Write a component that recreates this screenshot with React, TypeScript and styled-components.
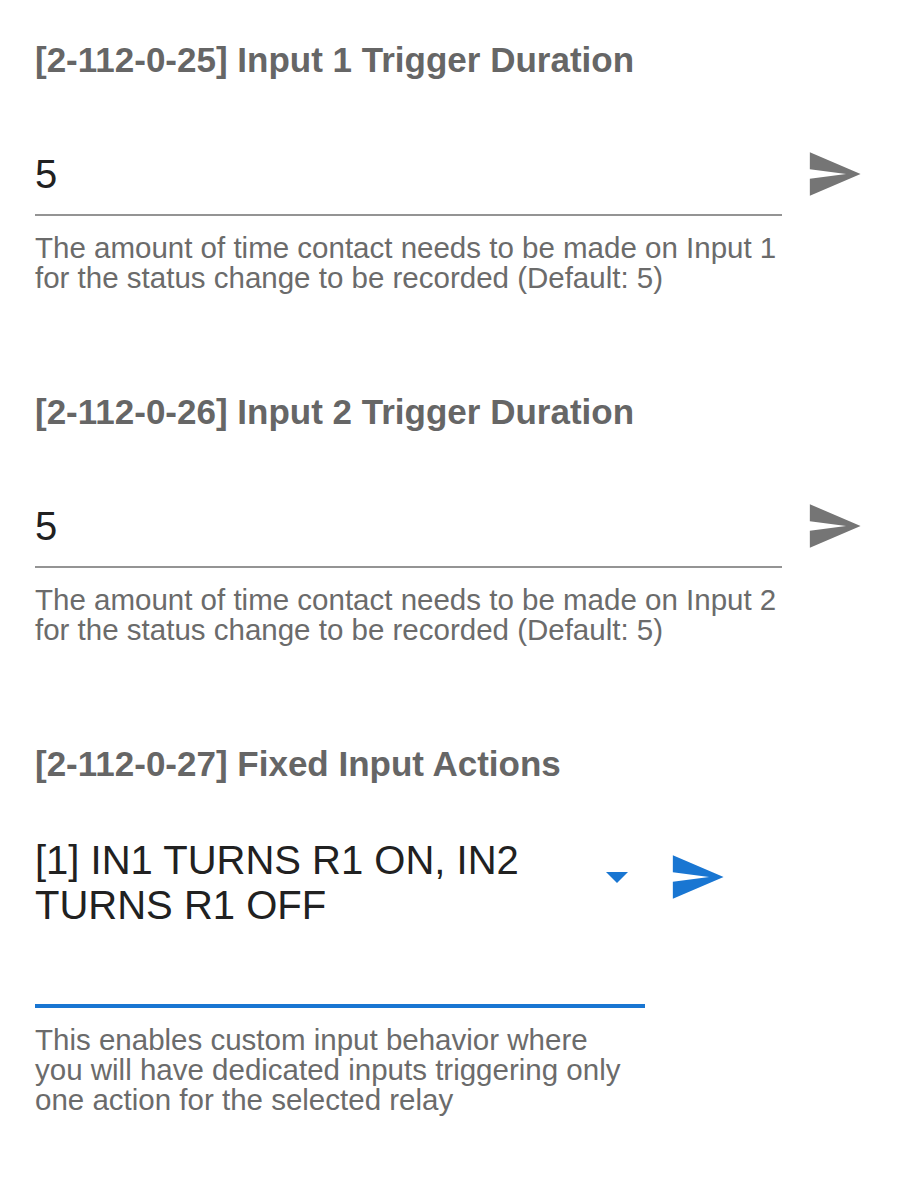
import styled, { createGlobalStyle } from "styled-components";

const GlobalStyle = createGlobalStyle`
  html, body {
    margin: 0;
    padding: 0;
    background: #ffffff;
  }
  body {
    font-family: "Liberation Sans", Arial, sans-serif;
  }
`;

const Page = styled.div`
  display: flex;
  flex-direction: column;
  padding: 41px 0 60px 35px;
`;

const Section = styled.section<{ gapAfter: number }>`
  display: flex;
  flex-direction: column;
  margin-bottom: ${(p) => p.gapAfter}px;
`;

const Title = styled.h2<{ spaceBelow: number }>`
  margin: 0 0 ${(p) => p.spaceBelow}px 0;
  font-size: 35px;
  line-height: 38px;
  font-weight: 700;
  color: #666666;
`;

const FieldRow = styled.div`
  display: flex;
  align-items: flex-start;
  gap: 23px;
`;

const TextField = styled.div<{ width: number }>`
  width: ${(p) => p.width}px;
  padding-bottom: 16px;
  border-bottom: 2px solid #949494;
  font-size: 40px;
  line-height: 48px;
  color: #212121;
`;

const SelectField = styled.div<{ width: number }>`
  position: relative;
  width: ${(p) => p.width}px;
  box-sizing: border-box;
  padding: 0 60px 76px 0;
  border-bottom: 4px solid #1976d2;
  font-size: 40px;
  line-height: 45px;
  color: #212121;
`;

const Arrow = styled.span`
  position: absolute;
  right: 17px;
  top: 34px;
  width: 0;
  height: 0;
  border-left: 11.5px solid transparent;
  border-right: 11.5px solid transparent;
  border-top: 11px solid #1976d2;
`;

const SendButton = styled.button<{ offset: number }>`
  display: flex;
  padding: 0;
  border: none;
  background: none;
  cursor: pointer;
  margin-top: ${(p) => p.offset}px;
`;

const Helper = styled.p<{ width: number }>`
  margin: 17px 0 0 0;
  width: ${(p) => p.width}px;
  font-size: 29.5px;
  line-height: 30px;
  color: #6b6b6b;
`;

const SendIcon = ({ color }: { color: string }) => (
  <svg width="58" height="58" viewBox="0 0 24 24">
    <path fill={color} d="M2.01 21L23 12 2.01 3 2 10l15 2-15 2z" />
  </svg>
);

const durations = [
  { id: "25", input: 1 },
  { id: "26", input: 2 },
];

export default function App() {
  return (
    <>
      <GlobalStyle />
      <Page>
        {durations.map((d) => (
          <Section key={d.id} gapAfter={100}>
            <Title spaceBelow={71}>
              [2-112-0-{d.id}] Input {d.input} Trigger Duration
            </Title>
            <FieldRow>
              <TextField width={747}>5</TextField>
              <SendButton offset={-5}>
                <SendIcon color="#757575" />
              </SendButton>
            </FieldRow>
            <Helper width={760}>
              The amount of time contact needs to be made on Input {d.input} for
              the status change to be recorded (Default: 5)
            </Helper>
          </Section>
        ))}
        <Section gapAfter={0}>
          <Title spaceBelow={55}>[2-112-0-27] Fixed Input Actions</Title>
          <FieldRow>
            <SelectField width={610}>
              [1] IN1 TURNS R1 ON, IN2 TURNS R1 OFF
              <Arrow />
            </SelectField>
            <SendButton offset={10}>
              <SendIcon color="#1976d2" />
            </SendButton>
          </FieldRow>
          <Helper width={600}>
            This enables custom input behavior where you will have dedicated
            inputs triggering only one action for the selected relay
          </Helper>
        </Section>
      </Page>
    </>
  );
}
